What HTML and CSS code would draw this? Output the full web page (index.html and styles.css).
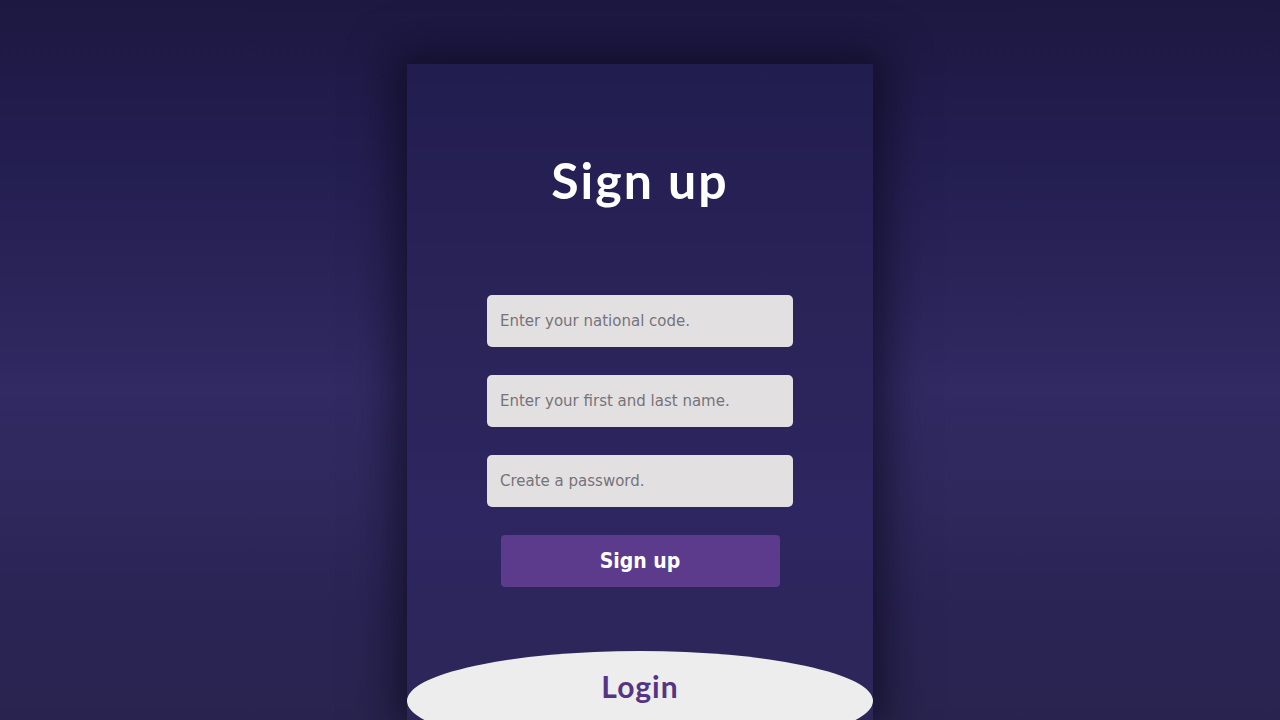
FILE: index.html
```html
<!DOCTYPE html>
<html lang="en">
<head>
<meta charset="utf-8">
<title>Sign up</title>
<link rel="stylesheet" href="styles.css">
</head>
<body>
<main class="card">
  <h1 class="title">Sign up</h1>
  <form class="form">
    <input class="field" type="text" placeholder="Enter your national code.">
    <input class="field" type="text" placeholder="Enter your first and last name.">
    <input class="field" type="password" placeholder="Create a password.">
    <button class="submit" type="button">Sign up</button>
  </form>
  <div class="login">
    <span class="login-label">Login</span>
  </div>
</main>
</body>
</html>
```
FILE: styles.css
```css
html, body {
  margin: 0;
  height: 100%;
}
body {
  overflow: hidden;
  background: linear-gradient(180deg, #1c1840 0%, #221d4e 18%, #2a2459 40%, #312a63 54%, #2e285c 70%, #2a2454 85%, #29244f 100%);
  display: flex;
  justify-content: center;
  padding-top: 64px;
  box-sizing: border-box;
}
.card {
  width: 466px;
  height: 656px;
  background: linear-gradient(180deg, #221d4f 0%, #2a2459 40%, #2d2660 70%, #2c2658 100%);
  box-shadow: 0 0 40px 12px rgba(10, 8, 25, 0.65);
  display: flex;
  flex-direction: column;
  align-items: center;
  overflow: hidden;
}
.title {
  margin: 86px 0 0;
  font-family: "Lato", "Noto Sans", sans-serif;
  font-weight: 700;
  font-size: 50px;
  line-height: 60px;
  color: #ffffff;
  letter-spacing: 2px;
}
.form {
  margin-top: 85px;
  display: flex;
  flex-direction: column;
  align-items: center;
  gap: 28px;
}
.field {
  width: 306px;
  height: 52px;
  box-sizing: border-box;
  border: none;
  border-radius: 5px;
  background: #e2e0e1;
  padding: 0 13px;
  font-family: "DejaVu Sans", Verdana, sans-serif;
  font-size: 15px;
  color: #333;
  outline: none;
}
.field::placeholder {
  color: #77737a;
}
.submit {
  width: 279px;
  height: 52px;
  border: none;
  border-radius: 4px;
  background: #5c3a8c;
  color: #ffffff;
  font-family: "DejaVu Sans Condensed", "DejaVu Sans", sans-serif;
  font-weight: 700;
  font-size: 21px;
  cursor: pointer;
}
.login {
  margin-top: 64px;
  width: 100%;
  height: 100px;
  flex: none;
  border-radius: 50%;
  background: #ededed;
  display: flex;
  justify-content: center;
}
.login-label {
  margin-top: 17px;
  font-family: "Lato", "Noto Sans", sans-serif;
  font-weight: 700;
  font-size: 30px;
  line-height: 36px;
  letter-spacing: 1px;
  color: #553484;
}
```
